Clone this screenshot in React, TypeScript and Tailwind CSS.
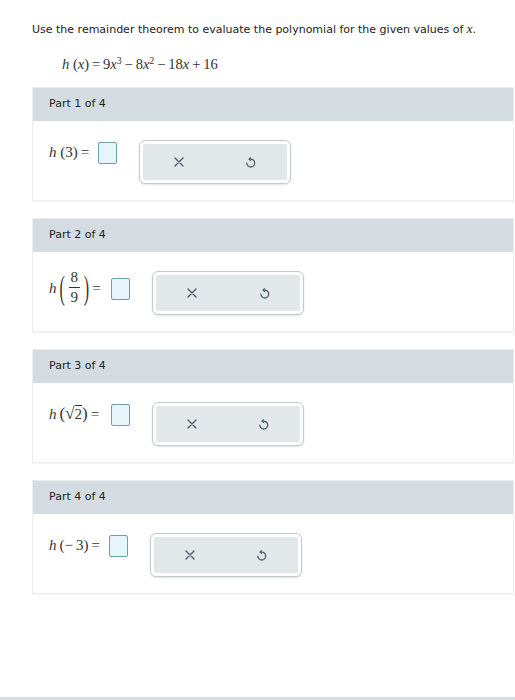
import type { ReactNode } from "react";

const serif = "font-['Liberation_Serif','Times_New_Roman',serif]";

function UndoIcon() {
  return (
    <svg width="11" height="11" viewBox="0 0 12 12" fill="none" stroke="#4f5f6b" strokeWidth="1.4" strokeLinecap="round" strokeLinejoin="round">
      <path d="M2 6.6 A4.3 4.3 0 1 0 6.3 2.3 L4.6 2.3" />
      <path d="M5.9 0.9 L4.5 2.3 L5.9 3.7" />
    </svg>
  );
}

function XIcon() {
  return (
    <svg width="10" height="10" viewBox="0 0 10 10" stroke="#4f5f6b" strokeWidth="1.4" strokeLinecap="round">
      <path d="M1 1 L9 9 M9 1 L1 9" />
    </svg>
  );
}

function AnswerBox() {
  return <div className="mt-[2px] h-[22px] w-[19px] shrink-0 rounded-[2px] border border-[#6f9fad] bg-[#e6f5f9]" />;
}

function Tools() {
  return (
    <div className="ml-[22px] rounded-[6px] border border-[#c3cacf] bg-white p-[3px] shadow-[0_1px_2px_rgba(0,0,0,0.12)]">
      <div className="flex h-[36px] w-[144px] rounded-[2px] bg-[#e2e7ea]">
        <button className="flex flex-1 items-center justify-center">
          <XIcon />
        </button>
        <button className="flex flex-1 items-center justify-center">
          <UndoIcon />
        </button>
      </div>
    </div>
  );
}

function Part({ n, label }: { n: number; label: ReactNode }) {
  return (
    <div className="ml-8 w-[482px] border border-[#ebedef] bg-white shadow-[0_1px_1px_rgba(0,0,0,0.04)]">
      <div className="flex h-[33px] items-center bg-[#d4dce1] pl-4 text-[11px] text-[#222]">
        Part {n} of 4
      </div>
      <div className="flex items-start pt-[19px] pb-[16px] pl-4">
        <div className="flex items-center gap-[5px]">
          <div className={`${serif} flex items-center text-[15px] leading-[20px] text-[#333]`}>{label}</div>
          <AnswerBox />
        </div>
        <Tools />
      </div>
    </div>
  );
}

export default function App() {
  return (
    <div className="flex h-[700px] w-[515px] flex-col overflow-hidden bg-white font-['DejaVu_Sans',Verdana,sans-serif] text-[#222]">
      <p className="mt-[22px] ml-8 text-[11px] leading-[14px]">
        Use the remainder theorem to evaluate the polynomial for the given values of{" "}
        <i className={`${serif} text-[13px]`}>x</i>.
      </p>
      <div className={`${serif} mt-[18px] ml-[62px] text-[14.5px] leading-[18px] text-[#333]`}>
        <i>h</i>&nbsp;(<i>x</i>)&thinsp;=&thinsp;9<i>x</i>
        <sup className="text-[10px]">3</sup>&thinsp;−&thinsp;8<i>x</i>
        <sup className="text-[10px]">2</sup>&thinsp;−&thinsp;18<i>x</i>&thinsp;+&thinsp;16
      </div>

      <div className="mt-[14px] flex flex-col gap-[17px]">
        <Part
          n={1}
          label={
            <>
              <i>h</i>&nbsp;(3)&thinsp;=&nbsp;
            </>
          }
        />
        <Part
          n={2}
          label={
            <>
              <i>h</i>
              <span className="ml-[3px] inline-block scale-y-[2.1] text-[16px] font-light leading-none">(</span>
              <span className={`${serif} mx-[4px] flex flex-col items-center text-[15px] leading-[13px]`}>
                <span>8</span>
                <span className="my-[3px] h-px w-[11px] bg-[#333]" />
                <span>9</span>
              </span>
              <span className="inline-block scale-y-[2.1] text-[16px] font-light leading-none">)</span>
              <span className="mr-[2px] ml-[3px]">=</span>&nbsp;
            </>
          }
        />
        <Part
          n={3}
          label={
            <>
              <i>h</i>
              <span className="ml-[3px] text-[17px]">(</span>
              <span className="text-[17px]">√</span>
              <span className="border-t border-[#333] leading-[17px]">2</span>
              <span className="text-[17px]">)</span>
              <span className="ml-[3px]">=</span>&nbsp;&thinsp;
            </>
          }
        />
        <Part
          n={4}
          label={
            <>
              <i>h</i>&thinsp;(−&thinsp;3)&thinsp;=&nbsp;
            </>
          }
        />
      </div>

      <div className="mt-auto h-[3px] bg-[#d6dce0]" />
    </div>
  );
}
